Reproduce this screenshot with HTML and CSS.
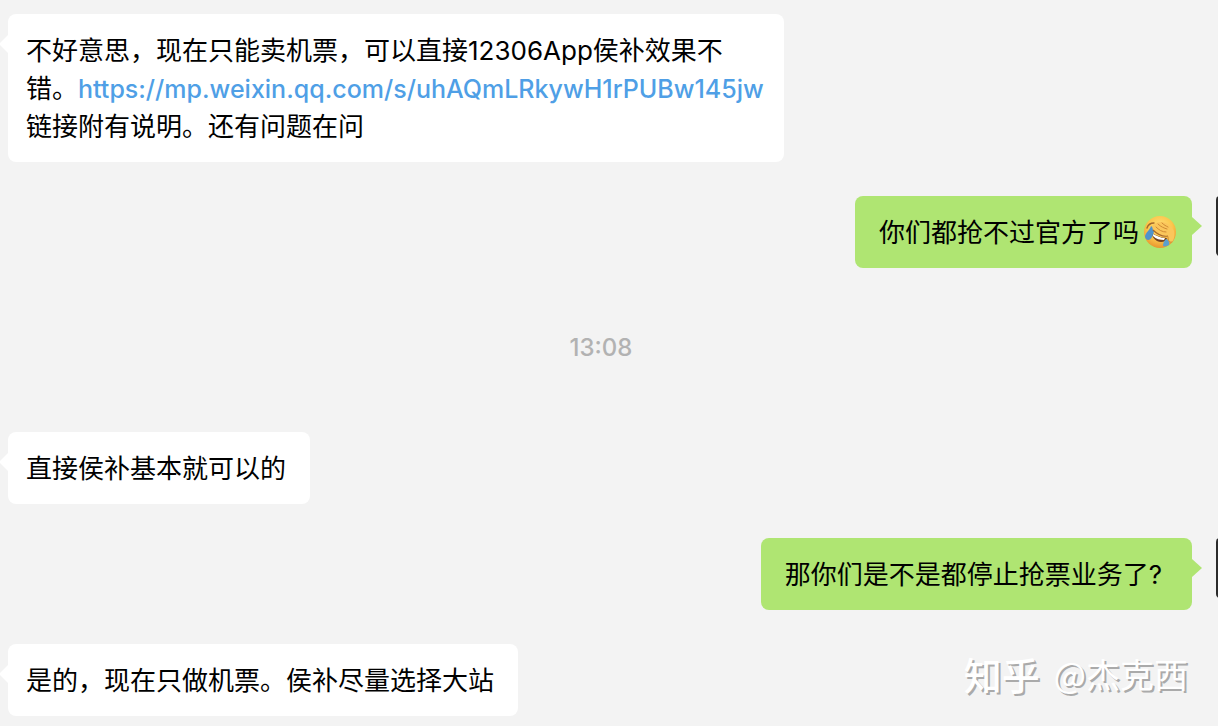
FILE: index.html
```html
<!DOCTYPE html>
<html lang="zh-CN">

<head>
  <meta charset="UTF-8">
  <meta name="viewport" content="width=device-width, initial-scale=1.0">
  <title>聊天记录</title>
  <link rel="stylesheet" href="styles.css">
</head>

<body>
  <main class="chat">
    <div class="row">
      <div class="bubble has_link">不好意思，现在只能卖机票，可以直接12306App侯补效果不<br>错。<a href="https://mp.weixin.qq.com/s/uhAQmLRkywH1rPUBw145jw">https://mp.weixin.qq.com/s/uhAQmLRkywH1rPUBw145jw</a><br>链接附有说明。还有问题在问</div>
    </div>

    <div class="row mine">
      <div class="bubble has_emoji">你们都抢不过官方了吗<svg class="emoji" viewBox="0 0 34 34" role="img" aria-label="捂脸">
          <defs>
            <radialGradient id="face" cx="50%" cy="35%" r="65%">
              <stop offset="0" stop-color="#ffe07a"/>
              <stop offset="0.6" stop-color="#fbc64c"/>
              <stop offset="1" stop-color="#e9952e"/>
            </radialGradient>
          </defs>
          <circle cx="17" cy="17" r="16" fill="url(#face)"/>
          <path d="M9 18C13 20 18 23 24 23C23 27 18 28 14 26C11 24 9 22 9 18Z" fill="#74401f"/>
          <path d="M10 19C14 21 18 23 22 23L21 25C17 25 13 24 10 21Z" fill="#fff"/>
          <path d="M8 11C7 15 2 18 2 22C3 26 7 26 9 22C10 19 11 17 12 14Z" fill="#4f93cc"/>
          <path d="M23 24C25 24 27 27 26 30C24 31 22 32 20 31C20 28 21 26 23 24Z" fill="#5b9fcd"/>
          <path d="M4 13C5 10 8 8 11 8" fill="none" stroke="#a4682a" stroke-width="1.4" stroke-linecap="round"/>
          <path d="M9 11C11 9 14 7 18 7C24 7 29 11 31 16C32 20 31 25 29 27C26 28 25 25 25 22C20 22 14 19 10 15Z" fill="#fac65b"/>
          <path d="M10 15C14 19 20 22 25 21" fill="none" stroke="#a9682a" stroke-width="1.2"/>
          <path d="M13 12C16 15 19 17 23 17M15 9C18 12 21 13 24 14M19 8C21 10 23 11 25 12M25 22C25 25 26 28 29 27" fill="none" stroke="#d08a35" stroke-width="1" stroke-linecap="round"/>
        </svg></div>
      <div class="avatar"></div>
    </div>

    <time class="time">13:08</time>

    <div class="row">
      <div class="bubble">直接侯补基本就可以的</div>
    </div>

    <div class="row mine">
      <div class="bubble">那你们是不是都停止抢票业务了?</div>
      <div class="avatar"></div>
    </div>

    <div class="row">
      <div class="bubble">是的，现在只做机票。侯补尽量选择大站</div>
    </div>
  </main>

  <div class="watermark"><b>知乎</b><span>@杰克西</span></div>
</body>

</html>
```
FILE: styles.css
```css
* {
  box-sizing: border-box;
}

body {
  margin: 0;
  background-color: #f3f3f3;
  color: #000;
  font-family: Inter, "Noto Sans CJK SC", sans-serif;
  font-size: 26px;
  line-height: 38px;
  position: relative;
  overflow-x: hidden;
}

.chat {
  display: flex;
  flex-direction: column;
  gap: 34px;
  padding: 14px 24px 10px 8px;
}

.row {
  display: flex;
  align-items: flex-start;
}

.mine {
  justify-content: flex-end;
  margin-right: 2px;
}

.bubble {
  position: relative;
  padding: 18px 24px 16px 18px;
  border-radius: 8px;
  background-color: #fff;
}

.bubble::before {
  content: "";
  position: absolute;
  top: 21px;
  left: -9px;
  border-top: 9px solid transparent;
  border-bottom: 9px solid transparent;
  border-right: 9px solid #fff;
}

.mine .bubble {
  padding: 18px 30px 16px 24px;
  background-color: #afe572;
}

.mine .bubble::before {
  left: auto;
  right: -10px;
  border-right: none;
  border-left: 10px solid #afe572;
}

.bubble.has_link {
  padding-right: 20px;
}

.mine .has_emoji {
  padding-right: 15px;
}

.bubble a {
  color: #4f9fe6;
  font-size: 25px;
  font-weight: 500;
  text-decoration: none;
}

.emoji {
  display: inline-block;
  width: 34px;
  height: 34px;
  margin: -6px 0 0 4px;
  vertical-align: middle;
}

/* only the left edge of the avatar stays inside the window */
.avatar {
  flex: none;
  width: 60px;
  height: 60px;
  margin-left: 24px;
  margin-right: -84px;
  border-radius: 4px;
  background-color: #2b2b2b;
}

.time {
  display: block;
  height: 96px;
  line-height: 92px;
  text-align: center;
  font-size: 24px;
  font-weight: 500;
  color: #b2b2b2;
}

.watermark {
  position: absolute;
  right: 30px;
  bottom: 28px;
  display: flex;
  align-items: center;
  gap: 14px;
  font-family: "Noto Sans CJK SC", sans-serif;
  font-size: 34px;
  line-height: 48px;
  color: #fff;
  text-shadow: 2px 2px 0 #aaa;
}

.watermark b {
  font-size: 38px;
  font-weight: 500;
}
```
